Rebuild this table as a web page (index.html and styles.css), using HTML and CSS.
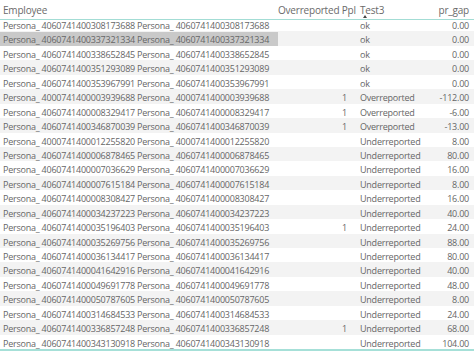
FILE: index.html
```html
<!DOCTYPE html>
<html>
<head>
<meta charset="utf-8">
<link rel="stylesheet" href="styles.css">
</head>
<body>
<div class="head row">
  <div class="c emp">Employee</div>
  <div class="c ppl">Overreported Ppl</div>
  <div class="c t3"><span class="sort">Test3<span class="arrow"></span></span></div>
  <div class="c gap">pr_gap</div>
</div>
<div class="viewport">
 <div class="rows">
  <div class="row"><div class="c emp">Persona_ 4060741400308173688 Persona_ 4060741400308173688</div><div class="c ppl"></div><div class="c t3">ok</div><div class="c gap">0.00</div></div>
  <div class="row alt sel"><div class="c emp">Persona_ 4060741400337321334 Persona_ 4060741400337321334</div><div class="c ppl"></div><div class="c t3">ok</div><div class="c gap">0.00</div></div>
  <div class="row"><div class="c emp">Persona_ 4060741400338652845 Persona_ 4060741400338652845</div><div class="c ppl"></div><div class="c t3">ok</div><div class="c gap">0.00</div></div>
  <div class="row alt"><div class="c emp">Persona_ 4060741400351293089 Persona_ 4060741400351293089</div><div class="c ppl"></div><div class="c t3">ok</div><div class="c gap">0.00</div></div>
  <div class="row"><div class="c emp">Persona_ 4060741400353967991 Persona_ 4060741400353967991</div><div class="c ppl"></div><div class="c t3">ok</div><div class="c gap">0.00</div></div>
  <div class="row alt"><div class="c emp">Persona_ 4000741400003939688 Persona_ 4000741400003939688</div><div class="c ppl">1</div><div class="c t3">Overreported</div><div class="c gap">-112.00</div></div>
  <div class="row"><div class="c emp">Persona_ 4060741400008329417 Persona_ 4060741400008329417</div><div class="c ppl">1</div><div class="c t3">Overreported</div><div class="c gap">-6.00</div></div>
  <div class="row alt"><div class="c emp">Persona_ 4060741400346870039 Persona_ 4060741400346870039</div><div class="c ppl">1</div><div class="c t3">Overreported</div><div class="c gap">-13.00</div></div>
  <div class="row"><div class="c emp">Persona_ 4000741400012255820 Persona_ 4000741400012255820</div><div class="c ppl"></div><div class="c t3">Underreported</div><div class="c gap">8.00</div></div>
  <div class="row alt"><div class="c emp">Persona_ 4060741400006878465 Persona_ 4060741400006878465</div><div class="c ppl"></div><div class="c t3">Underreported</div><div class="c gap">80.00</div></div>
  <div class="row"><div class="c emp">Persona_ 4060741400007036629 Persona_ 4060741400007036629</div><div class="c ppl"></div><div class="c t3">Underreported</div><div class="c gap">16.00</div></div>
  <div class="row alt"><div class="c emp">Persona_ 4060741400007615184 Persona_ 4060741400007615184</div><div class="c ppl"></div><div class="c t3">Underreported</div><div class="c gap">8.00</div></div>
  <div class="row"><div class="c emp">Persona_ 4060741400008308427 Persona_ 4060741400008308427</div><div class="c ppl"></div><div class="c t3">Underreported</div><div class="c gap">16.00</div></div>
  <div class="row alt"><div class="c emp">Persona_ 4060741400034237223 Persona_ 4060741400034237223</div><div class="c ppl"></div><div class="c t3">Underreported</div><div class="c gap">40.00</div></div>
  <div class="row"><div class="c emp">Persona_ 4060741400035196403 Persona_ 4060741400035196403</div><div class="c ppl">1</div><div class="c t3">Underreported</div><div class="c gap">24.00</div></div>
  <div class="row alt"><div class="c emp">Persona_ 4060741400035269756 Persona_ 4060741400035269756</div><div class="c ppl"></div><div class="c t3">Underreported</div><div class="c gap">88.00</div></div>
  <div class="row"><div class="c emp">Persona_ 4060741400036134417 Persona_ 4060741400036134417</div><div class="c ppl"></div><div class="c t3">Underreported</div><div class="c gap">80.00</div></div>
  <div class="row alt"><div class="c emp">Persona_ 4060741400041642916 Persona_ 4060741400041642916</div><div class="c ppl"></div><div class="c t3">Underreported</div><div class="c gap">40.00</div></div>
  <div class="row"><div class="c emp">Persona_ 4060741400049691778 Persona_ 4060741400049691778</div><div class="c ppl"></div><div class="c t3">Underreported</div><div class="c gap">48.00</div></div>
  <div class="row alt"><div class="c emp">Persona_ 4060741400050787605 Persona_ 4060741400050787605</div><div class="c ppl"></div><div class="c t3">Underreported</div><div class="c gap">8.00</div></div>
  <div class="row"><div class="c emp">Persona_ 4060741400314684533 Persona_ 4060741400314684533</div><div class="c ppl"></div><div class="c t3">Underreported</div><div class="c gap">24.00</div></div>
  <div class="row alt"><div class="c emp">Persona_ 4060741400336857248 Persona_ 4060741400336857248</div><div class="c ppl">1</div><div class="c t3">Underreported</div><div class="c gap">68.00</div></div>
  <div class="row"><div class="c emp">Persona_ 4060741400343130918 Persona_ 4060741400343130918</div><div class="c ppl"></div><div class="c t3">Underreported</div><div class="c gap">104.00</div></div>
 </div>
</div>
<div class="footer"></div>
</body>
</html>
```

FILE: styles.css
```css
html, body {
  margin: 0;
  padding: 0;
  background: #ffffff;
  overflow: hidden;
}
body {
  width: 474px;
  height: 351px;
  font-family: "Open Sans", "Noto Sans", sans-serif;
  font-size: 9px;
  letter-spacing: -0.23px;
  color: #666666;
  display: flex;
  flex-direction: column;
}
.row {
  display: grid;
  grid-template-columns: 278px 74px 72px 48px;
  height: 14.45px;
  box-sizing: border-box;
  padding-top: 3px;
  flex: none;
  align-items: center;
  white-space: nowrap;
}
.row.alt {
  background: #f3f3f3;
}
.row.head {
  height: 20px;
  border-bottom: 1px solid #a3ddd5;
  background: #fff;
  align-items: start;
  padding-top: 4px;
  font-size: 10px;
  letter-spacing: -0.2px;
  color: #6a6a6a;
  position: relative;
  z-index: 1;
}
.viewport {
  flex: 1;
  overflow: hidden;
  min-height: 0;
}
.rows {
  display: flex;
  flex-direction: column;
  margin-top: -3px;
}
.c {
  line-height: 12px;
}
.emp {
  padding-left: 3px;
}
.row.sel {
  padding-top: 0;
}
.row.sel .emp {
  background: #c9c9c9;
  height: 14.45px;
  box-sizing: border-box;
  padding-top: 3px;
  display: flex;
  align-items: center;
}
.row.sel .ppl,
.row.sel .t3,
.row.sel .gap {
  padding-top: 3px;
}
.ppl {
  text-align: right;
  padding-right: 5px;
}
.head .ppl {
  padding-right: 1px;
}
.t3 {
  padding-left: 8px;
}
.gap {
  text-align: right;
  padding-right: 3px;
}
.sort {
  position: relative;
  display: inline-block;
}
.arrow {
  position: absolute;
  left: 3px;
  top: 11px;
  width: 0;
  height: 0;
  border-left: 2.5px solid transparent;
  border-right: 2.5px solid transparent;
  border-bottom: 3px solid #444;
}
.footer {
  flex: none;
  height: 2px;
  background: #a6e0d8;
}
```
